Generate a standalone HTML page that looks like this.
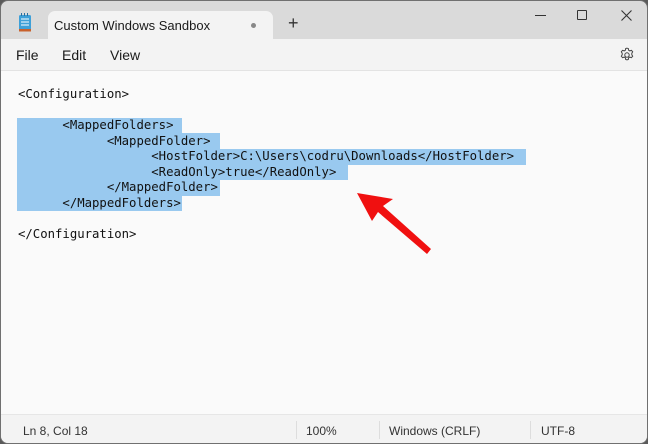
<!DOCTYPE html>
<html><head><style>
*{margin:0;padding:0;box-sizing:border-box}
body{width:648px;height:444px;background:#5a5a5a;overflow:hidden;font-family:"Liberation Sans",sans-serif}
.win{position:absolute;left:0;top:0;width:648px;height:444px;border:1px solid #707070;border-radius:8px;overflow:hidden;background:#dadada}
.tab{position:absolute;left:47px;top:10px;width:225px;height:29px;background:#f3f3f3;border-radius:7px 7px 0 0}
.tab span{position:absolute;left:6px;top:7px;font-size:13px;color:#1a1a1a}
.dot{position:absolute;left:203px;top:12px;width:5px;height:5px;border-radius:50%;background:#888}
.menu{position:absolute;left:0;top:38px;width:648px;height:32px;background:#f3f3f3;border-bottom:1px solid #e3e3e3;font-size:14px;color:#1a1a1a}
.menu span{position:absolute;top:8px}
.ed{position:absolute;left:0;top:70px;width:648px;height:343px;background:#fafafa}
pre{position:absolute;left:17px;top:16px;font-family:"DejaVu Sans Mono","Liberation Mono",monospace;font-size:12.3px;line-height:15.5px;color:#111}
.s{background:#99c9ef}
.st{position:absolute;left:0;top:413px;width:648px;height:31px;background:#f3f3f3;border-top:1px solid #e6e6e6;font-size:12px;color:#333}
.st span{position:absolute;top:9px}
.sep{position:absolute;top:6px;width:1px;height:18px;background:#ddd}
</style></head><body><div class="win">
<svg style="position:absolute;left:17px;top:12px" width="14" height="20" viewBox="0 0 14 20"><rect x="1" y="2" width="12" height="16" rx="1.5" fill="#3ea0d8"/><rect x="1" y="16" width="12" height="2.5" fill="#c8612c"/><g stroke="#fff" stroke-width="1"><line x1="3" y1="6" x2="11" y2="6"/><line x1="3" y1="9" x2="11" y2="9"/><line x1="3" y1="12" x2="11" y2="12"/></g><g fill="#2a6fa0"><rect x="3" y="0" width="1" height="3"/><rect x="6" y="0" width="1" height="3"/><rect x="9" y="0" width="1" height="3"/></g></svg>
<div class="tab"><span>Custom Windows Sandbox</span><div class="dot"></div></div>
<div style="position:absolute;left:287px;top:12px;font-size:18px;color:#333">+</div>
<div style="position:absolute;left:534px;top:14px;width:11px;height:1px;background:#333"></div>
<div style="position:absolute;left:576px;top:9px;width:10px;height:10px;border:1px solid #333;border-radius:1px"></div>
<svg style="position:absolute;left:620px;top:9px" width="11" height="11"><path d="M0.5 0.5L10.5 10.5M10.5 0.5L0.5 10.5" stroke="#333" stroke-width="1.1"/></svg>
<div class="menu"><span style="left:15px">File</span><span style="left:61px">Edit</span><span style="left:109px">View</span>
<svg style="position:absolute;left:618px;top:8px" width="16" height="16" viewBox="0 0 16 16"><path d="M8 1.2l1.3.3.3 1.7 1.2.7 1.6-.6 1.3 1.5-.9 1.5v1.4l.9 1.5-1.3 1.5-1.6-.6-1.2.7-.3 1.7-1.3.3-1.3-.3-.3-1.7-1.2-.7-1.6.6-1.3-1.5.9-1.5V6.3l-.9-1.5 1.3-1.5 1.6.6 1.2-.7.3-1.7z" fill="none" stroke="#444" stroke-width="1"/><circle cx="8" cy="8" r="2.2" fill="none" stroke="#444" stroke-width="1"/></svg></div>
<div class="ed">
<div class="s" style="position:absolute;left:16px;top:47px;width:165px;height:16px"></div>
<div class="s" style="position:absolute;left:16px;top:62px;width:203px;height:16px"></div>
<div class="s" style="position:absolute;left:16px;top:78px;width:509px;height:16px"></div>
<div class="s" style="position:absolute;left:16px;top:93px;width:331px;height:16px"></div>
<div class="s" style="position:absolute;left:16px;top:109px;width:203px;height:16px"></div>
<div class="s" style="position:absolute;left:16px;top:124px;width:165px;height:16px"></div>
<pre>&lt;Configuration&gt;

      &lt;MappedFolders&gt;
            &lt;MappedFolder&gt;
                  &lt;HostFolder&gt;C:\Users\codru\Downloads&lt;/HostFolder&gt;
                  &lt;ReadOnly&gt;true&lt;/ReadOnly&gt;
            &lt;/MappedFolder&gt;
      &lt;/MappedFolders&gt;

&lt;/Configuration&gt;</pre>
<svg style="position:absolute;left:0;top:0" width="648" height="343"><polygon points="356,122 392,128 382,135 430,178 426,183 377,141 371,150" fill="#f01010"/></svg>
</div>
<div class="st"><span style="left:22px">Ln 8, Col 18</span><div class="sep" style="left:295px"></div><span style="left:305px">100%</span><div class="sep" style="left:378px"></div><span style="left:388px">Windows (CRLF)</span><div class="sep" style="left:529px"></div><span style="left:540px">UTF-8</span></div>
</div></body></html>
